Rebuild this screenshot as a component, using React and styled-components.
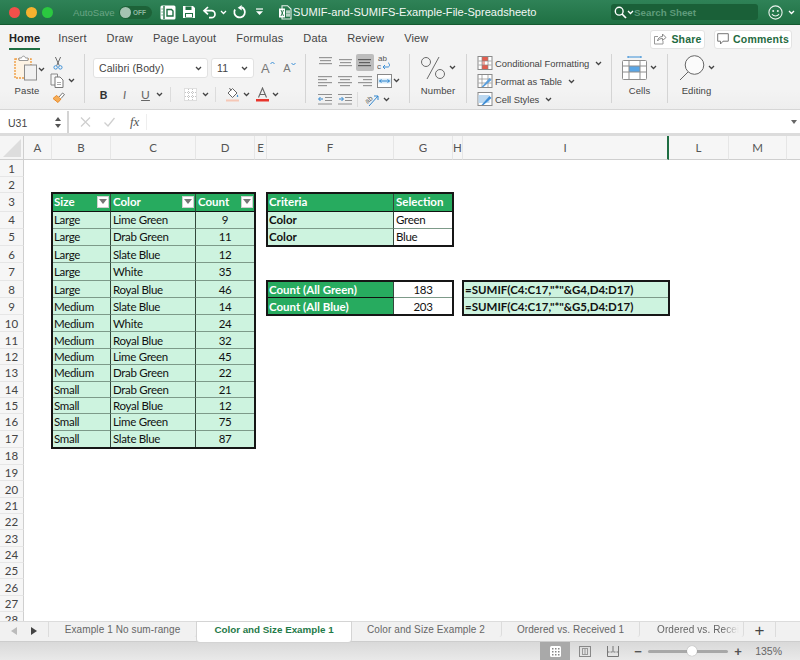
import styled, { createGlobalStyle } from "styled-components";

const GlobalStyle = createGlobalStyle`
  html, body { margin: 0; padding: 0; background: #fff; }
  * { box-sizing: border-box; }
`;

const UI_FONT = `"Liberation Sans", Arial, sans-serif`;
const CELL_FONT = `Lato, "Open Sans", sans-serif`;

const Window = styled.div`
  width: 800px;
  height: 660px;
  display: flex;
  flex-direction: column;
  overflow: hidden;
  font-family: ${UI_FONT};
  color: #3c3c3c;
`;
const Gap = styled.span`
  width: ${(p) => p.$w}px;
  flex: none;
`;

/* title bar */
const TitleBar = styled.div`
  height: 25px;
  flex: none;
  display: flex;
  align-items: center;
  background: linear-gradient(#2f8257, #1f7043);
  border-bottom: 1px solid #14592f;
  color: #fff;
`;
const Light = styled.span`
  width: 11px;
  height: 11px;
  border-radius: 50%;
  flex: none;
  margin-right: 5.5px;
  background: ${(p) => p.$color};
`;
const Lights = styled.div`
  display: flex;
  flex: none;
  margin-left: 9px;
  width: 64px;
`;
const AutoSave = styled.span`
  font-size: 9.6px;
  color: #6ba585;
  width: 46px;
  flex: none;
`;
const Toggle = styled.span`
  width: 33px;
  height: 13px;
  flex: none;
  border-radius: 7px;
  background: #1d6238;
  display: flex;
  align-items: center;
  padding-left: 1px;
  gap: 2px;
  font-size: 6.5px;
  font-weight: 700;
  color: #8fb9a2;
  margin-right: 8px;
  &::before {
    content: "";
    width: 11px;
    height: 11px;
    border-radius: 50%;
    background: #a5c4b2;
  }
`;
const QuickIcons = styled.div`
  display: flex;
  align-items: center;
  flex: none;
  margin-right: 1px;
`;
const DocName = styled.span`
  font-size: 11.1px;
  color: #f2f7f4;
  white-space: nowrap;
  width: 318px;
  flex: none;
`;
const SearchBox = styled.div`
  width: 147px;
  height: 16px;
  flex: none;
  border-radius: 3px;
  background: #1a6038;
  display: flex;
  align-items: center;
  padding-left: 3px;
  font-size: 9.8px;
  font-weight: 700;
  color: #5f9c7b;
`;
const Account = styled.div`
  display: flex;
  align-items: center;
  flex: none;
  margin-left: 10px;
  gap: 5px;
`;

/* ribbon tabs */
const TabRow = styled.div`
  height: 25px;
  flex: none;
  display: flex;
  align-items: center;
  padding-left: 9px;
  background: #f3f3f3;
`;
const MenuTab = styled.span`
  font-size: 11px;
  letter-spacing: 0.15px;
  margin-right: ${(p) => (p.$active ? 18 : 20)}px;
  height: 100%;
  display: flex;
  align-items: center;
  padding-top: 3px;
  color: ${(p) => (p.$active ? "#222" : "#444")};
  font-weight: ${(p) => (p.$active ? 700 : 400)};
  border-bottom: 2px solid ${(p) => (p.$active ? "#1e6e42" : "transparent")};
`;
const RightButtons = styled.div`
  margin-left: auto;
  margin-right: 8px;
  display: flex;
  gap: 9px;
  padding-top: 3px;
`;
const ActionButton = styled.button`
  height: 19px;
  width: ${(p) => p.$w}px;
  background: #fff;
  border: 1px solid #e3e3e3;
  border-radius: 3px;
  display: flex;
  align-items: center;
  justify-content: center;
  gap: 4px;
  padding: 0;
  font-family: ${UI_FONT};
  font-size: 10.5px;
  font-weight: 700;
  letter-spacing: 0.2px;
  color: #1f6b41;
`;

/* ribbon */
const Ribbon = styled.div`
  height: 60px;
  flex: none;
  display: flex;
  padding: 4px 0 6px;
  background: linear-gradient(#f3f3f3 70%, #eeeeee);
  border-bottom: 1px solid #d6d6d6;
`;
const Group = styled.div`
  width: ${(p) => p.$w}px;
  flex: none;
  border-right: 1px solid ${(p) => (p.$last ? "transparent" : "#d4d4d4")};
  display: flex;
`;
const BigLabel = styled.span`
  font-size: 9.5px;
  letter-spacing: 0.1px;
  color: #444;
  white-space: nowrap;
`;
const BigColumn = styled.div`
  width: 100%;
  display: flex;
  flex-direction: column;
  align-items: center;
  gap: 4px;
`;
const BigTop = styled.div`
  height: 27px;
  display: flex;
  align-items: center;
  gap: 3px;
`;
const PasteColumn = styled(BigColumn)`
  width: 30px;
  flex: none;
  margin-left: 12px;
`;
const PasteChevron = styled.span`
  display: flex;
  flex: none;
  margin: 13px 0 0 -4px;
  height: 5px;
`;
const SmallTools = styled.div`
  margin: 3px 0 0 5px;
  display: flex;
  flex-direction: column;
  align-items: flex-start;
  justify-content: space-between;
  height: 47px;
`;
const ToolRow = styled.div`
  display: flex;
  align-items: center;
  gap: 4px;
  margin-left: ${(p) => p.$left || 0}px;
`;
const FontGroup = styled.div`
  display: flex;
  flex-direction: column;
  gap: 8px;
  padding: 4px 0 0 8px;
`;
const FontRow = styled.div`
  display: flex;
  align-items: center;
  min-height: 16px;
`;
const SelectBox = styled.div`
  width: ${(p) => p.$w}px;
  height: 20px;
  margin-right: 3px;
  background: #fff;
  border: 1px solid #e2e2e2;
  border-radius: 3px;
  display: flex;
  align-items: center;
  justify-content: space-between;
  padding: 0 5px;
  font-size: 10.5px;
  letter-spacing: 0.1px;
  color: #444;
`;
const SizeGlyph = styled.span`
  font-size: ${(p) => p.$size}px;
  color: #777;
  margin-left: ${(p) => p.$left}px;
  display: flex;
  align-items: flex-start;
  gap: 0.5px;
`;
const FormatGlyph = styled.span`
  width: 21px;
  text-align: center;
  font-size: 12px;
  font-family: ${CELL_FONT};
  color: ${(p) => (p.$bold ? "#333" : "#666")};
  font-weight: ${(p) => (p.$bold ? 700 : 400)};
  font-style: ${(p) => (p.$italic ? "italic" : "normal")};
  text-decoration: ${(p) => (p.$under ? "underline" : "none")};
`;
const ToolSep = styled.span`
  width: 1px;
  height: 15px;
  background: #dcdcdc;
  margin: 0 ${(p) => p.$m}px;
`;
const AlignGrid = styled.div`
  display: grid;
  grid-template-columns: 20px 20px 19px 20px 14px;
  grid-auto-rows: 18.5px;
  margin-left: 9px;
  margin-top: -1px;
  align-items: center;
  justify-items: center;
`;
const AlignActive = styled.span`
  width: 18px;
  height: 17px;
  background: #bdbdbd;
  border-radius: 2px;
  display: flex;
  align-items: center;
  justify-content: center;
`;
const MergeChevron = styled.span`
  display: flex;
  justify-self: start;
  margin-left: -1px;
`;
const OrientationCell = styled.div`
  grid-column: 3 / 6;
  display: flex;
  align-items: center;
  gap: 3px;
  justify-self: start;
  padding-left: 2px;
  &::before {
    content: "";
    width: 1px;
    height: 15px;
    background: #dcdcdc;
    margin-right: 3px;
  }
`;
const StyleList = styled.div`
  display: flex;
  flex-direction: column;
  justify-content: space-between;
  padding: 2px 0 0 10px;
  height: 52px;
`;
const StyleItem = styled.div`
  display: flex;
  align-items: center;
  font-size: 9.4px;
  color: #444;
  gap: 2px;
  span { margin-right: 4px; white-space: nowrap; }
`;

/* formula bar */
const FormulaBar = styled.div`
  height: 26px;
  flex: none;
  display: flex;
  padding-top: 1px;
  background: #fff;
  border-bottom: 3px solid #dcdcdc;
`;
const NameBox = styled.div`
  width: 69px;
  border-right: 2px solid #d4d4d4;
  display: flex;
  align-items: center;
  justify-content: space-between;
  padding: 1px 6px 0 8px;
  font-size: 10.5px;
  color: #444;
`;
const Stepper = styled.div`
  display: flex;
  flex-direction: column;
  gap: 3px;
  &::before, &::after {
    content: "";
    border-left: 3px solid transparent;
    border-right: 3px solid transparent;
  }
  &::before { border-bottom: 4px solid #555; }
  &::after { border-top: 4px solid #555; }
`;
const FormulaTools = styled.div`
  width: 78px;
  display: flex;
  align-items: center;
  padding-left: 11px;
  gap: 13px;
  border-right: 1px solid #eeeeee;
  margin: 3px 0;
`;
const FxLabel = styled.span`
  font-family: "Liberation Serif", serif;
  font-style: italic;
  font-size: 13px;
  color: #555;
  margin-left: 2px;
`;
const FormulaInput = styled.div`
  flex: 1;
  display: flex;
  justify-content: flex-end;
  align-items: center;
  padding-right: 3px;
  &::after {
    content: "";
    border-left: 3px solid transparent;
    border-right: 3px solid transparent;
    border-top: 4px solid #666;
  }
`;

/* sheet */
const Sheet = styled.div`
  flex: 1;
  min-height: 0;
  overflow: hidden;
  display: grid;
  grid-template-columns: 24px 28px 59px 85px 59px 12px 127px 59px 10px 206px 60px 58px 60px;
  grid-template-rows: 24px ${(p) => p.$rows};
  background: #fff;
  font-family: ${CELL_FONT};
`;
const Corner = styled.div`
  grid-column: 1;
  grid-row: 1;
  background: #f5f5f5;
  border-bottom: 1px solid #cfcfcf;
  border-right: 1px solid #cfcfcf;
  position: relative;
  &::after {
    content: "";
    position: absolute;
    right: 2px;
    bottom: 2px;
    width: 18px;
    height: 18px;
    background: #dddddd;
    clip-path: polygon(100% 0, 100% 100%, 0 100%);
  }
`;
const ColHead = styled.div`
  grid-row: 1;
  background: #f6f6f6;
  border-bottom: 1px solid #cfcfcf;
  border-right: ${(p) => (p.$marked ? "2px solid #1f6e43" : "1px solid #e6e6e6")};
  display: flex;
  align-items: center;
  justify-content: center;
  font-size: 11.5px;
  color: #555;
`;
const RowHead = styled.div`
  grid-column: 1;
  grid-row: ${(p) => p.$row};
  background: #f6f6f6;
  border-right: 1px solid #cfcfcf;
  border-bottom: 1px solid #e6e6e6;
  display: flex;
  align-items: center;
  justify-content: center;
  font-size: 11.5px;
  color: #444;
`;
const Block = styled.div`
  grid-column: ${(p) => p.$cols};
  grid-row: ${(p) => p.$rows};
  display: grid;
  grid-template-columns: subgrid;
  grid-template-rows: subgrid;
  outline: 2px solid #161616;
  outline-offset: -1px;
  z-index: 1;
`;
const CELL_BG = { head: "#27ab5f", light: "#cdf3df", plain: "#ffffff" };
const Cell = styled.div`
  background: ${(p) => CELL_BG[p.$fill]};
  color: ${(p) => (p.$fill === "head" ? "#fff" : "#111")};
  font-weight: ${(p) => (p.$fill === "head" || p.$bold ? 700 : 400)};
  font-size: 11.5px;
  letter-spacing: ${(p) => (p.$fill === "head" || p.$bold ? "0" : "-0.3px")};
  display: flex;
  align-items: center;
  justify-content: ${(p) => (p.$center ? "center" : "space-between")};
  padding: 0 2px;
  white-space: nowrap;
  border-right: 1px solid ${(p) => (p.$lastCol ? "transparent" : "#33473c")};
  border-bottom: 1px solid ${(p) => (p.$lastRow ? "transparent" : p.$fill === "head" ? "#111" : "#7d9a89")};
`;
const FilterButton = styled.span`
  width: 12px;
  height: 12px;
  margin-right: -1px;
  background: #fff;
  border: 1px solid #d0d0d0;
  display: flex;
  align-items: center;
  justify-content: center;
  &::after {
    content: "";
    border-left: 4px solid transparent;
    border-right: 4px solid transparent;
    border-top: 5px solid #777;
  }
`;

/* sheet tabs */
const SheetTabs = styled.div`
  height: 21px;
  flex: none;
  display: flex;
  background: #f1f1f1;
  border-top: 1px solid #dcdcdc;
  border-bottom: 1px solid #cdcdcd;
  font-size: 10px;
  letter-spacing: 0.1px;
  color: #666;
  z-index: 2;
`;
const TabArrows = styled.div`
  width: 49px;
  display: flex;
  align-items: center;
  justify-content: space-between;
  padding: 0 11px;
  border-right: 1px solid #dcdcdc;
  margin-bottom: 4px;
`;
const Arrow = styled.span`
  border-top: 4px solid transparent;
  border-bottom: 4px solid transparent;
  border-left: ${(p) => (p.$right ? "6px solid #444" : "none")};
  border-right: ${(p) => (p.$right ? "none" : "6px solid #bbb")};
  margin-top: 3px;
`;
const SheetTab = styled.div`
  width: ${(p) => p.$w}px;
  flex: none;
  display: flex;
  align-items: center;
  justify-content: ${(p) => (p.$clipped ? "flex-start" : "center")};
  padding: 0 0 ${(p) => (p.$active ? 5 : 0)}px ${(p) => (p.$clipped ? 17 : 0)}px;
  height: ${(p) => (p.$active ? "20px" : "auto")};
  white-space: nowrap;
  overflow: hidden;
  background: ${(p) => (p.$active ? "#fff" : "transparent")};
  color: ${(p) => (p.$active ? "#1f7a48" : "inherit")};
  font-weight: ${(p) => (p.$active ? 700 : 400)};
  font-size: ${(p) => (p.$active ? "9.8px" : "inherit")};
  letter-spacing: ${(p) => (p.$active ? "0" : "inherit")};
  border-radius: 0 0 3px 3px;
  box-shadow: ${(p) => (p.$active ? "0 0 0 1px #d4d4d4" : "none")};
  border-right: ${(p) => (p.$active ? "none" : "1px solid #dcdcdc")};
  margin-bottom: ${(p) => (p.$active ? 0 : 4)}px;
`;
const FadedText = styled.span`
  display: block;
  mask-image: linear-gradient(to right, #000 80%, transparent);
`;
const AddTab = styled.div`
  width: 32px;
  flex: none;
  display: flex;
  align-items: center;
  justify-content: center;
  font-size: 17px;
  color: #444;
  border-right: 1px solid #dcdcdc;
  margin-bottom: 4px;
  padding-top: 2px;
`;

/* status bar */
const StatusBar = styled.div`
  height: 18px;
  flex: none;
  display: flex;
  align-items: center;
  justify-content: flex-end;
  background: linear-gradient(#d9d9d9, #e9e9e9);
  padding-right: 18px;
`;
const ViewButton = styled.span`
  width: ${(p) => p.$w}px;
  height: 100%;
  display: flex;
  align-items: center;
  justify-content: center;
  background: ${(p) => (p.$active ? "#a9a9a9" : "transparent")};
`;
const ZoomSign = styled.span`
  font-size: 13px;
  font-weight: 700;
  color: #555;
  width: 10px;
  text-align: center;
`;
const ZoomTrack = styled.div`
  width: 80px;
  height: 3px;
  background: #a8a8a8;
  border-radius: 2px;
  margin: 0 5px;
  position: relative;
`;
const ZoomThumb = styled.span`
  position: absolute;
  left: 39px;
  top: -4px;
  width: 10px;
  height: 10px;
  border-radius: 50%;
  background: #fff;
  box-shadow: 0 0 1px #888;
`;
const ZoomValue = styled.span`
  font-size: 10.5px;
  color: #666;
  margin-left: 12px;
`;
const StatusRoom = styled.div`
  display: flex;
  align-items: center;
  height: 100%;
  margin-right: 7px;
`;

/* icons */
const Chevron = ({ color = "#444" }) => (
  <svg width="7" height="5" viewBox="0 0 7 5" style={{ flex: "none" }}>
    <path d="M1 1l2.5 2.5L6 1" fill="none" stroke={color} strokeWidth="1.3" />
  </svg>
);
const SidebarIcon = () => (
  <svg width="16" height="15" viewBox="0 0 16 15">
    <rect x="0.5" y="0.5" width="15" height="14" rx="1.5" fill="#fff" />
    <path d="M4 1v13M7 4.5h4.5L13 6v5H7z" fill="none" stroke="#1f7043" strokeWidth="1.4" />
    <path d="M1.6 4h1M1.6 7h1M1.6 10h1" stroke="#1f7043" />
  </svg>
);
const SaveIcon = () => (
  <svg width="14" height="14" viewBox="0 0 14 14">
    <path d="M1 1h10l2 2v10H1z" fill="#fff" />
    <rect x="3.5" y="1.5" width="6" height="3.5" fill="#1f7043" />
    <rect x="3" y="8" width="8" height="4.5" fill="#1f7043" />
    <rect x="4" y="9" width="6" height="3" fill="#fff" />
  </svg>
);
const UndoIcon = () => (
  <svg width="15" height="13" viewBox="0 0 15 13">
    <path d="M6 1L2 4.7l4 3.7M2.5 4.7h7a3.5 3.5 0 0 1 0 7H7" fill="none" stroke="#fff" strokeWidth="1.7" />
  </svg>
);
const RedoIcon = () => (
  <svg width="15" height="14" viewBox="0 0 15 14">
    <path d="M9.5 2.2A5.3 5.3 0 1 1 3 4.5" fill="none" stroke="#fff" strokeWidth="1.8" />
    <path d="M9.7 0v5.4l-4-2.7z" fill="#fff" />
  </svg>
);
const CustomizeIcon = () => (
  <svg width="9" height="8" viewBox="0 0 9 8">
    <path d="M1 1h7" stroke="#fff" strokeWidth="1.2" />
    <path d="M1 3.3h7L4.5 7z" fill="#fff" />
  </svg>
);
const WorkbookIcon = () => (
  <svg width="14" height="15" viewBox="0 0 14 15">
    <path d="M4 .7h5.5L13 4v10H4z" fill="none" stroke="#e6f0ea" strokeWidth="1.1" />
    <path d="M1 3.5h6v9H1z" fill="#fff" />
    <path d="M9 5v7M11 5v7M8 7h4M8 10h4" stroke="#e6f0ea" />
    <path d="M3 5l2.5 6M5.5 5L3 11" stroke="#1f7043" strokeWidth=".9" />
  </svg>
);
const SearchIcon = () => (
  <svg width="13" height="13" viewBox="0 0 13 13" style={{ flex: "none" }}>
    <circle cx="5.2" cy="5.2" r="3.9" fill="none" stroke="#fff" strokeWidth="1.4" />
    <path d="M8 8l4 4" stroke="#fff" strokeWidth="1.7" />
  </svg>
);
const SmileIcon = () => (
  <svg width="15" height="15" viewBox="0 0 15 15">
    <circle cx="7.5" cy="7.5" r="6.6" fill="none" stroke="#eaf2ed" strokeWidth="1.1" />
    <circle cx="5.2" cy="6" r="1" fill="#eaf2ed" />
    <circle cx="9.8" cy="6" r="1" fill="#eaf2ed" />
    <path d="M4 9c1.5 2.6 5.5 2.6 7 0" fill="none" stroke="#eaf2ed" strokeWidth="1.1" />
  </svg>
);
const ShareIcon = () => (
  <svg width="14" height="12" viewBox="0 0 14 12">
    <path d="M5 3.5H1.5V11H10V8" fill="none" stroke="#999" />
    <path d="M4.5 8C5 5 7 3.5 9.5 3.5V1L13 4.5 9.5 7.5V5.5C7.5 5.5 6 6 4.5 8z" fill="none" stroke="#888" />
  </svg>
);
const CommentIcon = () => (
  <svg width="12" height="12" viewBox="0 0 12 12">
    <path d="M.7.7h10.6v7.5H6L3.5 11V8.2H.7z" fill="none" stroke="#777" />
  </svg>
);
const PasteIcon = () => (
  <svg width="26" height="26" viewBox="1 0 26 26">
    <path d="M2 4h16v19H2z" fill="#fdf3e4" stroke="#ee9d43" strokeDasharray="2 1" strokeWidth="1.4" />
    <path d="M6 5.5V3h2.5C9 .5 12 .5 12.5 3H15v2.5z" fill="#fff" stroke="#999" />
    <rect x="11.5" y="10" width="12" height="15" fill="#f1f1f1" stroke="#8c8c8c" />
  </svg>
);
const ScissorsIcon = () => (
  <svg width="10" height="13" viewBox="0 0 11 15">
    <path d="M2.5 0L7 10M8.500 0L4 10" stroke="#555" />
    <circle cx="2.8" cy="12" r="2" fill="none" stroke="#3b8fd6" strokeWidth="1.1" />
    <circle cx="8.2" cy="12" r="2" fill="none" stroke="#3b8fd6" strokeWidth="1.1" />
  </svg>
);
const CopyIcon = () => (
  <svg width="14" height="15" viewBox="0 0 14 15">
    <path d="M1 1h6.5v11H1z" fill="#f6f6f6" stroke="#888" />
    <path d="M5 4h5l3 3v7.5H5z" fill="#fff" stroke="#777" />
    <path d="M7 9.5h4M7 11.5h4" stroke="#aaa" />
  </svg>
);
const BrushIcon = () => (
  <svg width="14" height="13" viewBox="0 0 14 13">
    <path d="M1 7.500l5 4 3-3.500-4.500-3.500z" fill="#f6ad57" stroke="#e88b2b" />
    <path d="M7 6l3.500-4 2 1.500L9 7.500" fill="#fff" stroke="#777" />
  </svg>
);
const BordersIcon = () => (
  <svg width="13" height="13" viewBox="0 0 13 13">
    <rect x="0.5" y="0.5" width="12" height="12" fill="#fff" stroke="#c4c4c4" strokeDasharray="1 1" />
    <path d="M4.5 1v11M8.5 1v11M1 4.5h11M1 8.5h11" stroke="#c4c4c4" strokeDasharray="1 1" />
  </svg>
);
const FillIcon = () => (
  <svg width="13" height="15" viewBox="0 0 13 15">
    <path d="M2 6l4.5-4.5L11 6l-4.5 4.5z" fill="#fff" stroke="#666" />
    <path d="M5 3.5L3.5 1" stroke="#666" />
    <path d="M11.5 7.5c1 1.5 1 2.5 0 2.5s-1-1 0-2.5z" fill="#3d8fd1" />
    <rect x="0" y="12.5" width="13" height="2" fill="#f6c7b6" />
  </svg>
);
const FontColorIcon = () => (
  <svg width="13" height="15" viewBox="0 0 13 15">
    <path d="M2.5 10.5L6.5 1l4 9.5M4 7.5h5" fill="none" stroke="#666" strokeWidth="1.1" />
    <rect x="0" y="12" width="13" height="2.5" fill="#e8352c" />
  </svg>
);
const Caret = ({ down }) => (
  <svg width="5" height="4" viewBox="0 0 5 4">
    <path d={down ? "M.5 1l2 2 2-2" : "M.5 3l2-2 2 2"} fill="none" stroke="#3b8fd6" />
  </svg>
);
const LINES = {
  left: [14, 9, 14, 9],
  center: [14, 10, 14, 10],
  right: [14, 9, 14, 9],
};
const AlignLines = ({ mode = "left" }) => (
  <svg width="14" height="12" viewBox="0 0 14 12">
    {LINES[mode].map((w, i) => {
      const x = mode === "left" ? 0 : mode === "right" ? 14 - w : (14 - w) / 2;
      return <rect key={i} x={x} y={i * 3 + 1} width={w} height="1.2" fill="#979797" />;
    })}
  </svg>
);
const VerticalLines = ({ y, dark }) => (
  <svg width="13" height="12" viewBox="0 0 13 12">
    {[0, 3, 6].map((d, i) => (
      <rect key={d} x={i === 1 ? 1 : 0} y={y + d} width={i === 1 ? 11 : 13} height="1.2" fill={dark ? "#5f5f5f" : "#979797"} />
    ))}
  </svg>
);
const WrapIcon = () => (
  <svg width="14" height="16" viewBox="0 0 14 16">
    <text x="1" y="7" fontSize="8" fontFamily="Liberation Sans" fill="#555">ab</text>
    <text x="0" y="15" fontSize="8" fontFamily="Liberation Sans" fill="#555">c</text>
    <path d="M6 13h5c2 0 2-4 0-4" fill="none" stroke="#3b8fd6" />
    <path d="M8 11l-2 2 2 2" fill="none" stroke="#3b8fd6" />
  </svg>
);
const MergeIcon = () => (
  <svg width="15" height="14" viewBox="0 0 15 14">
    <rect x="0.5" y="0.5" width="14" height="13" fill="#fff" stroke="#888" />
    <rect x="1" y="4.5" width="13" height="5" fill="#d9ebf8" />
    <path d="M2.5 7h10M2.5 7l2-1.5M2.5 7l2 1.500M12.500 7l-2-1.500M12.500 7l-2 1.500" stroke="#2f86cf" />
  </svg>
);
const IndentIcon = ({ flip }) => (
  <svg width="14" height="11" viewBox="0 0 14 11">
    <path d="M0 .5h14M7 3.5h7M7 6.5h7M0 10h14" stroke="#909090" />
    <path d={flip ? "M1 5h4M3.5 3l2 2-2 2" : "M1 5h4M2.5 3l-2 2 2 2"} fill="none" stroke="#2f86cf" />
  </svg>
);
const OrientationIcon = () => (
  <svg width="16" height="15" viewBox="0 0 16 15">
    <text x="1" y="10" fontSize="7" fontFamily="Liberation Sans" fill="#555" transform="rotate(-40 5 8)">ab</text>
    <path d="M5 14L14 4M10 4h4v4" fill="none" stroke="#2f86cf" />
  </svg>
);
const PercentIcon = () => (
  <svg width="26" height="24" viewBox="0 0 26 24">
    <circle cx="6" cy="6" r="4.5" fill="none" stroke="#6a6a6a" />
    <circle cx="20" cy="18" r="4.5" fill="none" stroke="#6a6a6a" />
    <path d="M19 1L7 23" stroke="#6a6a6a" />
  </svg>
);
const CondIcon = () => (
  <svg width="16" height="14" viewBox="0 0 15 14">
    <rect x="0.5" y="0.5" width="14" height="13" fill="#fff" stroke="#8a8a8a" />
    <rect x="4.5" y="1" width="6" height="4" fill="#e35d4e" />
    <rect x="4.5" y="5" width="3" height="4" fill="#f4a79e" />
    <rect x="4.5" y="9" width="6" height="4" fill="#e35d4e" />
    <path d="M4.5 1v12M10.5 1v12M1 5h13M1 9h13" stroke="#8a8a8a" strokeWidth=".7" />
  </svg>
);
const TableIcon = () => (
  <svg width="16" height="14" viewBox="0 0 15 14">
    <rect x="0.5" y="0.5" width="14" height="13" fill="#fff" stroke="#8a8a8a" />
    <path d="M4.5 1v12M10.5 1v12M1 5h13M1 9h13" stroke="#8a8a8a" strokeWidth=".7" />
    <path d="M4 13l8-9 2 2-8 7z" fill="#5b9fdc" />
  </svg>
);
const StylesIcon = () => (
  <svg width="16" height="14" viewBox="0 0 15 14">
    <rect x="0.5" y="0.5" width="14" height="13" fill="#fff" stroke="#8a8a8a" />
    <rect x="1" y="3" width="11" height="8" fill="#bcd8f0" />
    <path d="M4 13l8-9 2 2-8 7z" fill="#3f8ed6" />
  </svg>
);
const CellsIcon = () => (
  <svg width="25" height="24" viewBox="0 0 25 24">
    <path d="M6 1h13M6 0v2M19 0v2" stroke="#3b8fd6" />
    <rect x="0.5" y="4.5" width="24" height="19" rx="1" fill="#fff" stroke="#8e8e8e" />
    <rect x="7" y="10" width="11" height="6" fill="#5aa6e6" />
    <path d="M7 5v18M18 5v18M1 10h23M1 16h23" stroke="#8e8e8e" />
  </svg>
);
const LoupeIcon = () => (
  <svg width="26" height="26" viewBox="0 0 26 26">
    <circle cx="15.5" cy="10" r="9.3" fill="#fbfbfb" stroke="#666" />
    <path d="M9 17L1 25" stroke="#666" />
  </svg>
);
const CloseMark = ({ tick }) => (
  <svg width="11" height="10" viewBox="0 0 11 10">
    <path d={tick ? "M.5 5.5L4 9 10.5 1" : "M1 .5l9 9M10 .5l-9 9"} fill="none" stroke="#cfcfcf" strokeWidth="1.3" />
  </svg>
);
const NormalViewIcon = () => (
  <svg width="11" height="11" viewBox="0 0 11 11">
    <rect width="11" height="11" rx="1.5" fill="#fff" />
    {[2, 5, 8].flatMap((y) => [2, 5, 8].map((x) => <rect key={`${x}${y}`} x={x} y={y} width="1.5" height="1.5" fill="#888" />))}
  </svg>
);
const LayoutViewIcon = () => (
  <svg width="12" height="11" viewBox="0 0 12 11">
    <rect x="0.5" y="0.5" width="11" height="10" fill="none" stroke="#888" />
    <rect x="3.5" y="2.5" width="5" height="6" fill="none" stroke="#999" />
    <path d="M6 2.5v6" stroke="#999" />
  </svg>
);
const BreakViewIcon = () => (
  <svg width="12" height="11" viewBox="0 0 12 11">
    <path d="M.5 0v10.5h11V0" fill="none" stroke="#777" />
    <path d="M6 0v6" stroke="#777" />
    <path d="M.5 6h11" stroke="#777" strokeDasharray="2 1" />
  </svg>
);

/* data */
const ROW_EDGES = [160, 177, 193, 211.5, 228.5, 246, 263, 281, 298, 315, 332, 349, 365, 381.5, 397.5, 414, 430.5, 447.5, 465, 481, 498, 514, 530, 547, 563, 579, 596, 612, 628];
const ROW_TRACKS = ROW_EDGES.slice(1).map((e, i) => `${e - ROW_EDGES[i]}px`).join(" ");
const COLUMNS = ["A", "B", "C", "D", "E", "F", "G", "H", "I", "L", "M"];
const MENU = ["Home", "Insert", "Draw", "Page Layout", "Formulas", "Data", "Review", "View"];
const SALES = [
  ["Large", "Lime Green", 9],
  ["Large", "Drab Green", 11],
  ["Large", "Slate Blue", 12],
  ["Large", "White", 35],
  ["Large", "Royal Blue", 46],
  ["Medium", "Slate Blue", 14],
  ["Medium", "White", 24],
  ["Medium", "Royal Blue", 32],
  ["Medium", "Lime Green", 45],
  ["Medium", "Drab Green", 22],
  ["Small", "Drab Green", 21],
  ["Small", "Royal Blue", 12],
  ["Small", "Lime Green", 75],
  ["Small", "Slate Blue", 87],
];

export default function App() {
  return (
    <Window>
      <GlobalStyle />
      <TitleBar>
        <Lights>
          <Light $color="#f0504a" />
          <Light $color="#f6b22f" />
          <Light $color="#2bc840" />
        </Lights>
        <AutoSave>AutoSave</AutoSave>
        <Toggle>OFF</Toggle>
        <QuickIcons>
          <SidebarIcon />
          <Gap $w={6} />
          <SaveIcon />
          <Gap $w={6} />
          <UndoIcon />
          <Gap $w={3} />
          <Chevron color="#fff" />
          <Gap $w={5} />
          <RedoIcon />
          <Gap $w={8} />
          <CustomizeIcon />
          <Gap $w={14} />
          <WorkbookIcon />
        </QuickIcons>
        <DocName>SUMIF-and-SUMIFS-Example-File-Spreadsheeto</DocName>
        <SearchBox>
          <SearchIcon />
          <Chevron color="#fff" />
          Search Sheet
        </SearchBox>
        <Account>
          <SmileIcon />
          <Chevron color="#fff" />
        </Account>
      </TitleBar>

      <TabRow>
        {MENU.map((m) => (
          <MenuTab key={m} $active={m === "Home"}>{m}</MenuTab>
        ))}
        <RightButtons>
          <ActionButton $w={55}><ShareIcon />Share</ActionButton>
          <ActionButton $w={78}><CommentIcon />Comments</ActionButton>
        </RightButtons>
      </TabRow>

      <Ribbon>
        <Group $w={85}>
          <PasteColumn>
            <BigTop><PasteIcon /></BigTop>
            <BigLabel>Paste</BigLabel>
          </PasteColumn>
          <PasteChevron><Chevron /></PasteChevron>
          <SmallTools>
            <ToolRow $left={3}><ScissorsIcon /></ToolRow>
            <ToolRow><CopyIcon /><Chevron /></ToolRow>
            <ToolRow $left={2}><BrushIcon /></ToolRow>
          </SmallTools>
        </Group>

        <Group $w={221}>
          <FontGroup>
            <FontRow>
              <SelectBox $w={115}>Calibri (Body)<Chevron /></SelectBox>
              <SelectBox $w={43}>11<Chevron /></SelectBox>
              <SizeGlyph $size={13} $left={4}>A<Caret /></SizeGlyph>
              <SizeGlyph $size={11} $left={8}>A<Caret down /></SizeGlyph>
            </FontRow>
            <FontRow>
              <FormatGlyph $bold>B</FormatGlyph>
              <FormatGlyph $italic>I</FormatGlyph>
              <FormatGlyph $under>U</FormatGlyph>
              <Chevron />
              <ToolSep $m={7} />
              <Gap $w={6} />
              <BordersIcon />
              <Gap $w={5} />
              <Chevron />
              <ToolSep $m={6} />
              <Gap $w={4} />
              <FillIcon />
              <Gap $w={4} />
              <Chevron />
              <Gap $w={6} />
              <FontColorIcon />
              <Gap $w={3} />
              <Chevron />
            </FontRow>
          </FontGroup>
        </Group>

        <Group $w={104}>
          <AlignGrid>
            <VerticalLines y={1} />
            <VerticalLines y={3} />
            <AlignActive><VerticalLines y={3} dark /></AlignActive>
            <WrapIcon />
            <span />
            <AlignLines mode="left" />
            <AlignLines mode="center" />
            <AlignLines mode="right" />
            <MergeIcon />
            <MergeChevron><Chevron /></MergeChevron>
            <IndentIcon />
            <IndentIcon flip />
            <OrientationCell>
              <OrientationIcon />
              <Chevron />
            </OrientationCell>
          </AlignGrid>
        </Group>

        <Group $w={57}>
          <BigColumn>
            <BigTop><PercentIcon /><Chevron /></BigTop>
            <BigLabel>Number</BigLabel>
          </BigColumn>
        </Group>

        <Group $w={145}>
          <StyleList>
            <StyleItem><CondIcon /><span>Conditional Formatting</span><Chevron /></StyleItem>
            <StyleItem><TableIcon /><span>Format as Table</span><Chevron /></StyleItem>
            <StyleItem><StylesIcon /><span>Cell Styles</span><Chevron /></StyleItem>
          </StyleList>
        </Group>

        <Group $w={56}>
          <BigColumn>
            <BigTop><CellsIcon /><Chevron /></BigTop>
            <BigLabel>Cells</BigLabel>
          </BigColumn>
        </Group>

        <Group $w={58} $last>
          <BigColumn>
            <BigTop><LoupeIcon /><Chevron /></BigTop>
            <BigLabel>Editing</BigLabel>
          </BigColumn>
        </Group>
      </Ribbon>

      <FormulaBar>
        <NameBox>U31<Stepper /></NameBox>
        <FormulaTools>
          <CloseMark />
          <CloseMark tick />
          <FxLabel>fx</FxLabel>
        </FormulaTools>
        <FormulaInput />
      </FormulaBar>

      <Sheet $rows={ROW_TRACKS}>
        <Corner />
        {COLUMNS.map((c) => (
          <ColHead key={c} $marked={c === "I"}>{c}</ColHead>
        ))}
        <ColHead />
        {ROW_EDGES.slice(1).map((_, i) => (
          <RowHead key={i} $row={i + 2}>{i + 1}</RowHead>
        ))}

        <Block $cols="3 / 6" $rows="4 / 19">
          <Cell $fill="head">Size<FilterButton /></Cell>
          <Cell $fill="head">Color<FilterButton /></Cell>
          <Cell $fill="head" $lastCol>Count<FilterButton /></Cell>
          {SALES.map((row, i) => {
            const last = i === SALES.length - 1;
            return [
              <Cell key={`s${i}`} $fill="light" $lastRow={last}>{row[0]}</Cell>,
              <Cell key={`c${i}`} $fill="light" $lastRow={last}>{row[1]}</Cell>,
              <Cell key={`n${i}`} $fill="light" $lastRow={last} $lastCol $center>{row[2]}</Cell>,
            ];
          })}
        </Block>

        <Block $cols="7 / 9" $rows="4 / 7">
          <Cell $fill="head">Criteria</Cell>
          <Cell $fill="head" $lastCol>Selection</Cell>
          <Cell $fill="light" $bold>Color</Cell>
          <Cell $fill="plain" $lastCol>Green</Cell>
          <Cell $fill="light" $bold $lastRow>Color</Cell>
          <Cell $fill="plain" $lastCol $lastRow>Blue</Cell>
        </Block>

        <Block $cols="7 / 9" $rows="9 / 11">
          <Cell $fill="head">Count (All Green)</Cell>
          <Cell $fill="plain" $lastCol $center>183</Cell>
          <Cell $fill="head" $lastRow>Count (All Blue)</Cell>
          <Cell $fill="plain" $lastCol $lastRow $center>203</Cell>
        </Block>

        <Block $cols="10 / 11" $rows="9 / 11">
          <Cell $fill="light" $lastCol $bold>=SUMIF(C4:C17,"*"&amp;G4,D4:D17)</Cell>
          <Cell $fill="light" $lastCol $lastRow $bold>=SUMIF(C4:C17,"*"&amp;G5,D4:D17)</Cell>
        </Block>
      </Sheet>

      <SheetTabs>
        <TabArrows>
          <Arrow />
          <Arrow $right />
        </TabArrows>
        <SheetTab $w={148}>Example 1 No sum-range</SheetTab>
        <SheetTab $w={154} $active>Color and Size Example 1</SheetTab>
        <SheetTab $w={151}>Color and Size Example 2</SheetTab>
        <SheetTab $w={138}>Ordered vs. Received 1</SheetTab>
        <SheetTab $w={104} $clipped><FadedText>Ordered vs. Recei</FadedText></SheetTab>
        <AddTab>+</AddTab>
      </SheetTabs>

      <StatusBar>
        <StatusRoom>
          <ViewButton $w={30} $active><NormalViewIcon /></ViewButton>
          <ViewButton $w={30}><LayoutViewIcon /></ViewButton>
          <ViewButton $w={26}><BreakViewIcon /></ViewButton>
        </StatusRoom>
        <ZoomSign>−</ZoomSign>
        <ZoomTrack><ZoomThumb /></ZoomTrack>
        <ZoomSign>+</ZoomSign>
        <ZoomValue>135%</ZoomValue>
      </StatusBar>
    </Window>
  );
}
